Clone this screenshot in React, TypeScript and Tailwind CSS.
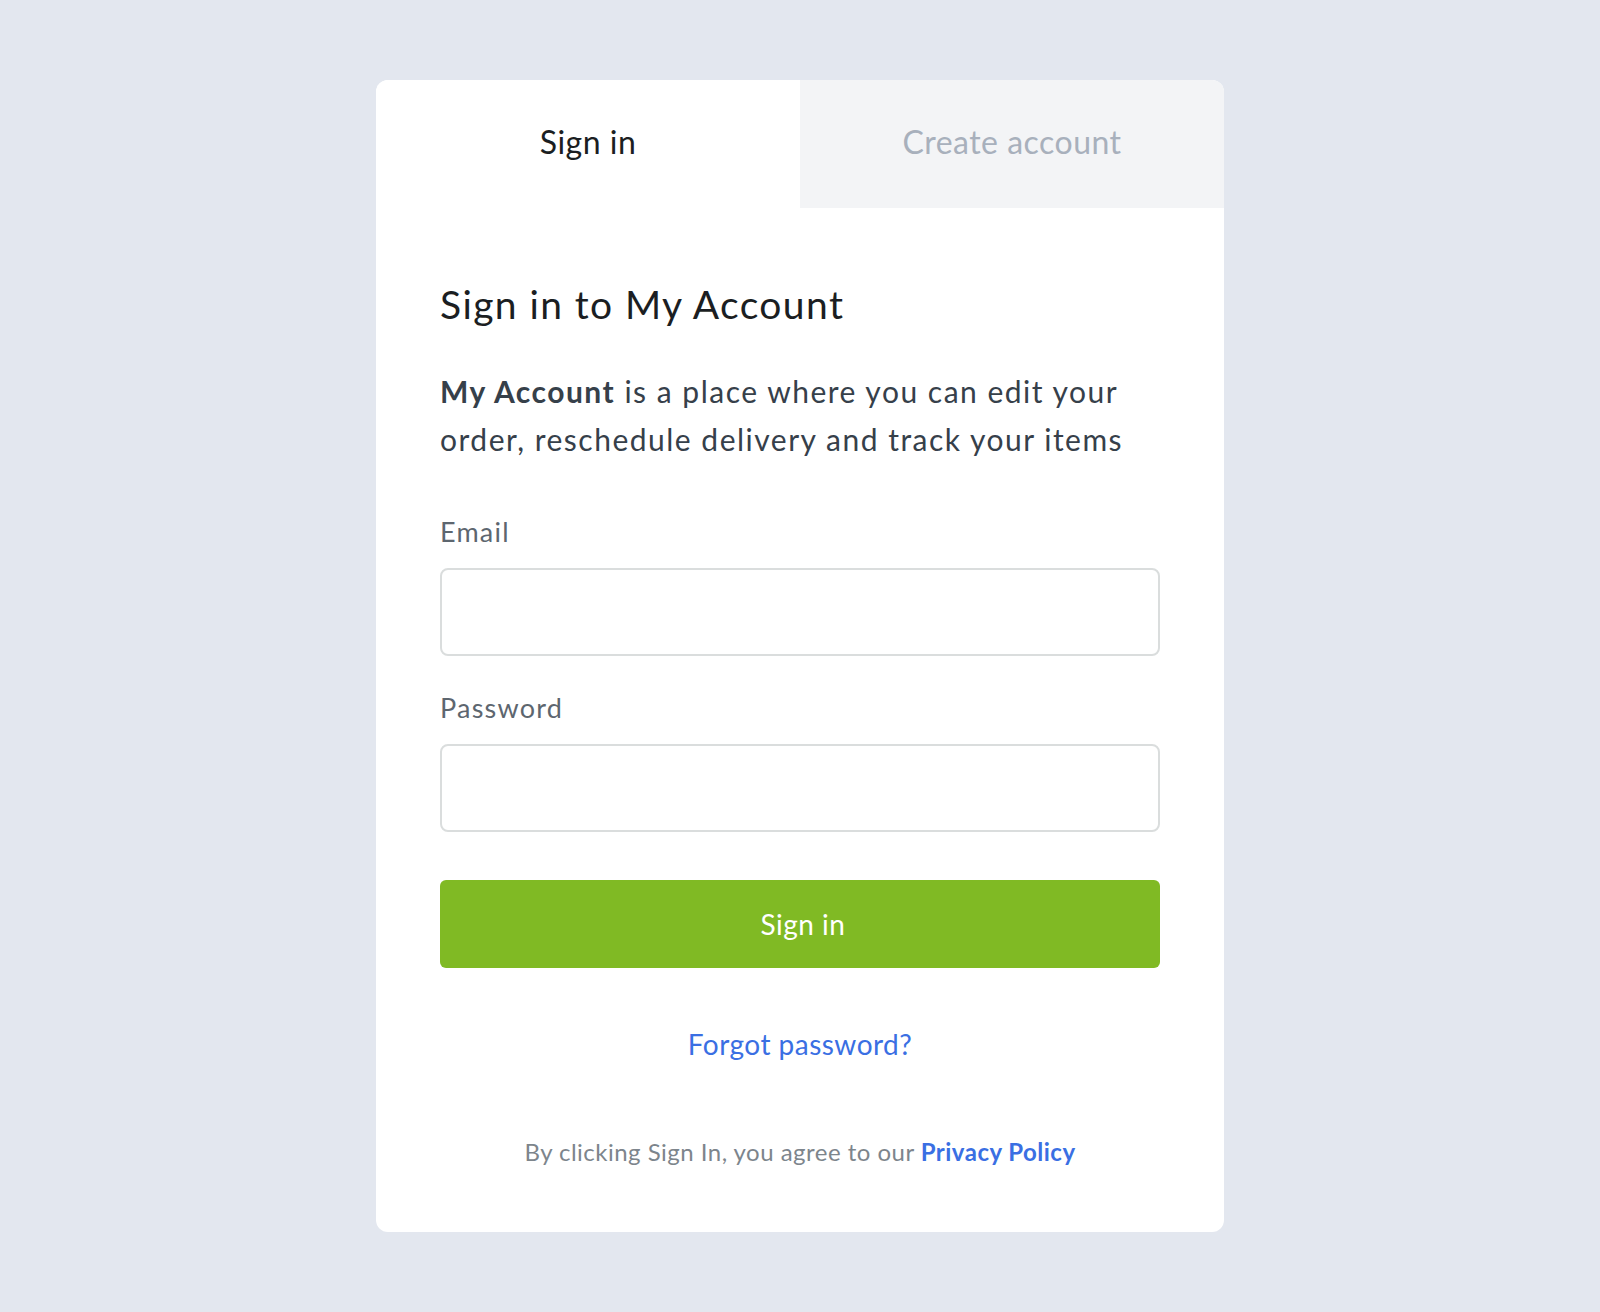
import { useState } from "react";

type Tab = "signin" | "create";

export default function App() {
  const [tab, setTab] = useState<Tab>("signin");
  const [email, setEmail] = useState("");
  const [password, setPassword] = useState("");

  return (
    <div
      className="min-h-screen bg-[#e3e7ef] flex justify-center pt-20 pb-20 tracking-[0.03em]"
      style={{ fontFamily: "Lato, 'Open Sans', sans-serif" }}
    >
      <div className="w-[848px] h-[1152px] bg-white rounded-xl overflow-hidden flex flex-col">
        <div className="flex h-32">
          <button
            onClick={() => setTab("signin")}
            className={`flex-1 flex items-center justify-center pb-1 text-[32px] ${
              tab === "signin" ? "bg-white text-[#1b1e22]" : "bg-[#f3f4f6] text-[#a8b0bc]"
            }`}
          >
            Sign in
          </button>
          <button
            onClick={() => setTab("create")}
            className={`flex-1 flex items-center justify-center pb-1 text-[32px] ${
              tab === "create" ? "bg-white text-[#1b1e22]" : "bg-[#f3f4f6] text-[#a8b0bc]"
            }`}
          >
            Create account
          </button>
        </div>

        <div className="flex flex-col px-16 pt-[72px]">
          <h1 className="text-[39px] leading-[48px] tracking-[0.036em] text-[#1b1e22]">
            Sign in to My Account
          </h1>
          <p className="mt-[39px] text-[30px] leading-[48px] tracking-[0.05em] text-[#36404a]">
            <span className="font-bold">My Account</span> is a place where you can edit your
            order, reschedule delivery and track your items
          </p>

          <label className="mt-[49px] text-[27px] leading-10 tracking-[0.045em] text-[#5d666f]">
            Email
          </label>
          <input
            type="email"
            value={email}
            onChange={(e) => setEmail(e.target.value)}
            className="mt-4 h-[88px] rounded-lg border-2 border-[#dadddd] px-6 text-[26px] outline-none"
          />

          <label className="mt-8 text-[27px] leading-10 tracking-[0.045em] text-[#5d666f]">
            Password
          </label>
          <input
            type="password"
            value={password}
            onChange={(e) => setPassword(e.target.value)}
            className="mt-4 h-[88px] rounded-lg border-2 border-[#dadddd] px-6 text-[26px] outline-none"
          />

          <button className="mt-12 h-[88px] rounded-md bg-[#80ba24] pl-1.5 text-white text-[28px]">
            Sign in
          </button>

          <a href="#" className="mt-14 self-center text-[28px] leading-10 text-[#3a6fe3]">
            Forgot password?
          </a>

          <p className="mt-[72px] text-center text-[24px] leading-8 text-[#7d858c]">
            By clicking Sign In, you agree to our{" "}
            <a href="#" className="font-bold text-[#3a6fe3]">
              Privacy Policy
            </a>
          </p>
        </div>
      </div>
    </div>
  );
}
